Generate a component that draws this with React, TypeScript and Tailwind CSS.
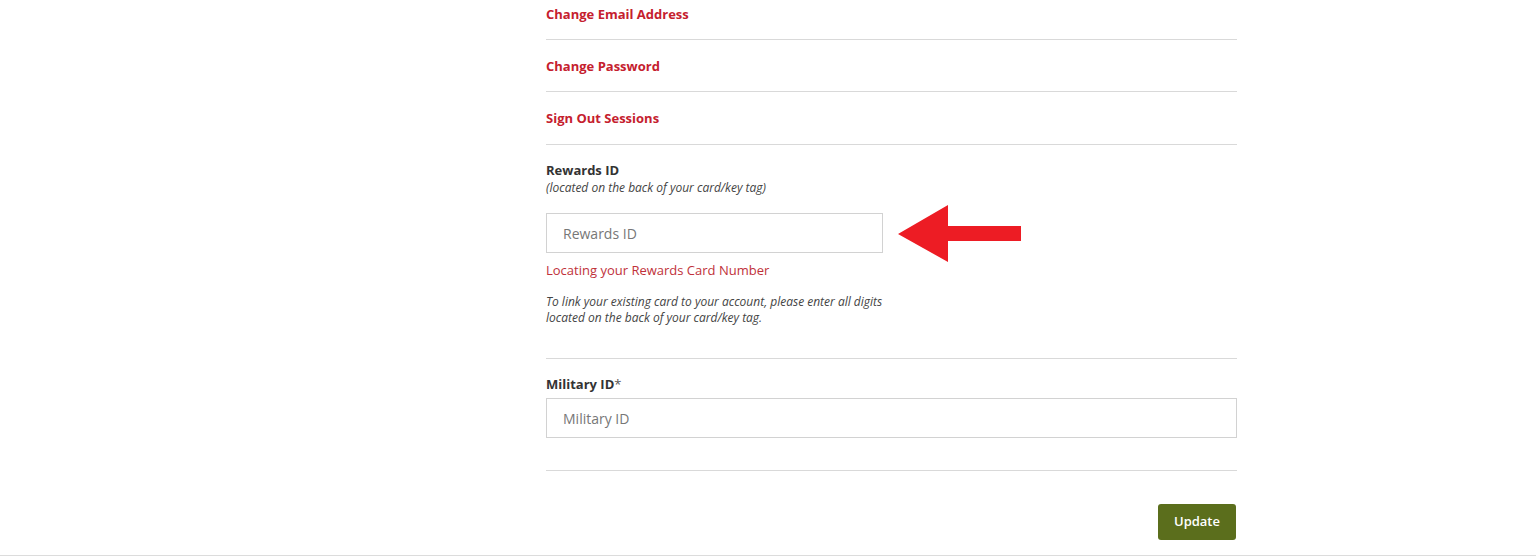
export default function App() {
  const links = ['Change Email Address', 'Change Password', 'Sign Out Sessions']

  return (
    <div className="min-h-[556px] bg-white font-['Open_Sans',sans-serif] text-[#333]">
      <div className="border-b border-[#dcdcdc]">
        <div className="ml-[546px] w-[691px]">
          {links.map((label, i) => (
            <div
              key={label}
              className={`${i === 0 ? 'pt-[4px]' : 'pt-[16px]'} ${i === 2 ? 'pb-[16px]' : 'pb-[15px]'} border-b border-[#d9d9d9]`}
            >
              <a className="block text-[13px] leading-[20px] font-bold text-[#c5202e]">{label}</a>
            </div>
          ))}

          {/* rewards */}
          <div className="pt-[15px] pb-[32px] border-b border-[#d9d9d9]">
            <div className="text-[13px] leading-[20px] font-bold text-[#333]">Rewards ID</div>
            <div className="text-[12px] leading-[16px] italic text-[#444]">(located on the back of your card/key tag)</div>
            <div className="mt-[17px] flex h-[40px] items-center">
              <input
                placeholder="Rewards ID"
                className="w-[337px] h-[40px] border border-[#d2d2d2] px-[16px] text-[14px] text-[#333] placeholder:text-[#777] outline-none"
              />
              <svg width="124" height="58" viewBox="0 0 124 58" className="ml-[15px] shrink-0 mt-[2px]">
                <polygon points="0,29 50,0 50,21 123,21 123,36 50,36 50,57" fill="#ed1c24" />
              </svg>
            </div>
            <a className="block mt-[7px] text-[13px] leading-[20px] text-[#c0313a]">Locating your Rewards Card Number</a>
            <p className="mt-[14px] w-[345px] text-[12px] leading-[16px] italic text-[#444]">
              To link your existing card to your account, please enter all digits located on the back of your card/key tag.
            </p>
          </div>

          {/* military */}
          <div className="pt-[15px] pb-[32px] border-b border-[#d9d9d9]">
            <div className="text-[13px] leading-[20px] font-bold text-[#333]">
              Military ID<span className="font-normal text-[#555]">*</span>
            </div>
            <input
              placeholder="Military ID"
              className="mt-[4px] w-full h-[40px] border border-[#d2d2d2] px-[16px] text-[14px] text-[#333] placeholder:text-[#777] outline-none"
            />
          </div>

          <div className="flex justify-end pt-[33px] pb-[15px]">
            <button className="w-[78px] h-[36px] rounded-[3px] bg-[#5b6e1c] text-[13px] font-semibold text-white mr-[1px]">
              Update
            </button>
          </div>
        </div>
      </div>
    </div>
  )
}
